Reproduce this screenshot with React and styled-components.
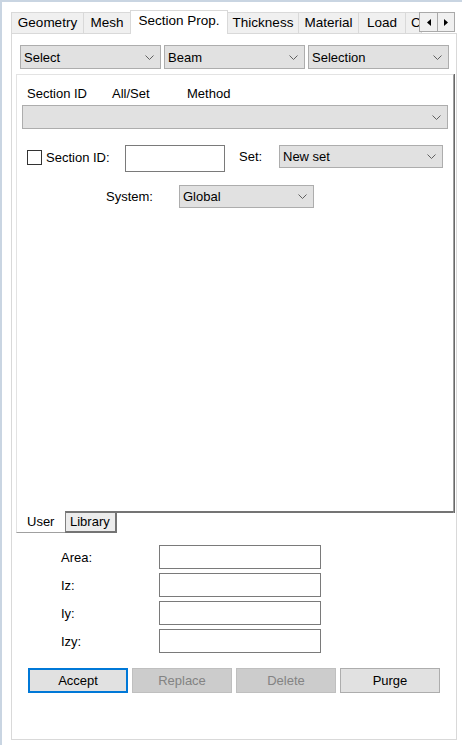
import React from 'react';
import styled, { createGlobalStyle } from 'styled-components';

const GlobalStyle = createGlobalStyle`
  * { box-sizing: border-box; }
  body {
    margin: 0;
    background: #fff;
    font-family: "Liberation Sans", Arial, sans-serif;
    font-size: 13px;
    color: #000;
  }
`;

const Window = styled.div`
  width: 462px;
  height: 745px;
  border-top: 2px solid #c9d5e2;
  border-left: 2px solid #c9d5e2;
  padding: 8px 0 5px 9px;
  display: flex;
  flex-direction: column;
  overflow: hidden;
`;

const TabStrip = styled.div`
  display: flex;
  align-items: flex-end;
  height: 23px;
  width: 446px;
`;

const Tab = styled.div`
  position: relative;
  flex: none;
  width: ${p => p.$width};
  height: ${p => (p.$active ? '24px' : '21px')};
  margin-bottom: ${p => (p.$active ? '-1px' : '0')};
  margin-right: -1px;
  z-index: ${p => (p.$active ? 2 : 1)};
  padding-left: ${p => (p.$clip ? '5px' : '0')};
  text-align: ${p => (p.$clip ? 'left' : 'center')};
  white-space: nowrap;
  line-height: 20px;
  font-size: 13.5px;
  background: ${p => (p.$active ? '#fff' : '#f0f0f0')};
  border: 1px solid #d9d9d9;
  border-bottom: none;
`;

const ScrollArrows = styled.div`
  align-self: flex-start;
  margin-top: 2px;
  margin-left: -2px;
  z-index: 3;
  display: flex;
  height: 20px;
  border: 1px solid #a9a9a9;
  background: #f0f0f0;
`;

const ArrowButton = styled.div`
  width: 17px;
  display: flex;
  align-items: center;
  justify-content: center;
  & + & { border-left: 1px solid #a9a9a9; }
`;

const Panel = styled.div`
  flex: 1;
  width: 446px;
  border: 1px solid #d9d9d9;
  padding: 11px 1px 0 4px;
  display: flex;
  flex-direction: column;
`;

const DropRow = styled.div`
  display: flex;
  gap: 3px;
  margin: 0 6px 0 4px;
`;

const SelectBox = styled.div`
  flex: ${p => (p.$width ? 'none' : '1')};
  width: ${p => p.$width || 'auto'};
  height: ${p => p.$height || '24px'};
  background: #e1e1e1;
  border: 1px solid #adadad;
  display: flex;
  align-items: center;
  justify-content: space-between;
  padding-left: 3px;
  white-space: nowrap;
`;

const Chevron = styled.svg`
  margin-right: 6px;
  flex: none;
`;

const Inner = styled.div`
  margin: 5px 1px 0 0;
  display: flex;
  flex-direction: column;
`;

const InnerBody = styled.div`
  height: 437px;
  border-top: 1px solid #e3e3e3;
  border-left: 1px solid #e3e3e3;
  border-right: 1px solid #a0a0a0;
  box-shadow: 1px 0 0 #696969;
  display: flex;
  flex-direction: column;
`;

const HeaderRow = styled.div`
  display: flex;
  margin-top: 11px;
  padding-left: 10px;
  line-height: 16px;
`;

const HeadCell = styled.span`
  width: ${p => p.$width || 'auto'};
`;

const ComboWrap = styled.div`
  margin: 3px 5px 0 5px;
`;

const CheckRow = styled.div`
  display: flex;
  align-items: flex-start;
  margin-top: 16px;
  padding-left: 10px;
`;

const CheckArea = styled.label`
  width: 98px;
  display: flex;
  align-items: center;
  height: 24px;
`;

const CheckBox = styled.span`
  width: 15px;
  height: 15px;
  border: 1px solid #333;
  background: #fff;
  margin-right: 4px;
`;

const TextField = styled.div`
  width: ${p => p.$width};
  height: ${p => p.$height || '24px'};
  border: 1px solid #7a7a7a;
  background: #fff;
`;

const FieldLabel = styled.span`
  width: ${p => p.$width};
  margin-left: ${p => p.$offset || '0'};
  line-height: 23px;
`;

const SystemRow = styled.div`
  display: flex;
  margin-top: 13px;
  padding-left: 89px;
`;

const BottomTabs = styled.div`
  display: flex;
  height: 22px;
`;

const UserTab = styled.div`
  width: 49px;
  height: 22px;
  background: #fff;
  border-left: 1px solid #e3e3e3;
  border-bottom: 1px solid #a0a0a0;
  padding-left: 10px;
  line-height: 21px;
`;

const LibraryTab = styled.div`
  width: 52px;
  height: 22px;
  background: #ececec;
  border: 1px solid #808080;
  border-top: 2px solid #747474;
  border-right: 2px solid #747474;
  border-bottom: 2px solid #747474;
  padding-left: 4px;
  line-height: 17px;
`;

const TabFiller = styled.div`
  flex: 1;
  border-top: 2px solid #747474;
  border-right: 1px solid #a0a0a0;
  box-shadow: 1px 0 0 #696969;
  height: 2px;
`;

const Fields = styled.div`
  display: grid;
  grid-template-columns: 98px 162px;
  row-gap: 4px;
  margin: 12px 0 0 45px;
  align-items: center;
`;

const ButtonRow = styled.div`
  display: flex;
  gap: 4px;
  margin: 15px 0 0 12px;
`;

const Button = styled.div`
  width: 100px;
  height: 25px;
  display: flex;
  align-items: center;
  justify-content: center;
  background: ${p => (p.$disabled ? '#cccccc' : '#e1e1e1')};
  color: ${p => (p.$disabled ? '#838383' : '#000')};
  border: ${p =>
    p.$default ? '2px solid #0078d7' : p.$disabled ? '1px solid #bfbfbf' : '1px solid #adadad'};
`;

const Down = () => (
  <Chevron width="9" height="5" viewBox="0 0 9 5">
    <polyline points="0.5,0.5 4.5,4.5 8.5,0.5" fill="none" stroke="#606060" strokeWidth="1" />
  </Chevron>
);

function Select({ children, width, height }) {
  return (
    <SelectBox $width={width} $height={height}>
      <span>{children}</span>
      <Down />
    </SelectBox>
  );
}

const tabs = [
  { label: 'Geometry', width: '73px' },
  { label: 'Mesh', width: '48px' },
  { label: 'Section Prop.', width: '98px', active: true },
  { label: 'Thickness', width: '72px' },
  { label: 'Material', width: '61px' },
  { label: 'Load', width: '48px' },
];

export default function App() {
  return (
    <>
      <GlobalStyle />
      <Window>
        <TabStrip>
          {tabs.map(t => (
            <Tab key={t.label} $width={t.width} $active={t.active}>{t.label}</Tab>
          ))}
          <Tab $width="17px" $clip>C</Tab>
          <ScrollArrows>
            <ArrowButton>
              <svg width="4" height="7" viewBox="0 0 4 7"><polygon points="4,0 4,7 0,3.5" fill="#000" /></svg>
            </ArrowButton>
            <ArrowButton>
              <svg width="4" height="7" viewBox="0 0 4 7"><polygon points="0,0 0,7 4,3.5" fill="#000" /></svg>
            </ArrowButton>
          </ScrollArrows>
        </TabStrip>

        <Panel>
          <DropRow>
            <Select>Select</Select>
            <Select>Beam</Select>
            <Select>Selection</Select>
          </DropRow>

          <Inner>
            <InnerBody>
              <HeaderRow>
                <HeadCell $width="85px">Section ID</HeadCell>
                <HeadCell $width="75px">All/Set</HeadCell>
                <HeadCell>Method</HeadCell>
              </HeaderRow>
              <ComboWrap>
                <Select />
              </ComboWrap>

              <CheckRow>
                <CheckArea>
                  <CheckBox />
                  Section ID:
                </CheckArea>
                <TextField $width="100px" $height="27px" />
                <FieldLabel $width="40px" $offset="14px">Set:</FieldLabel>
                <Select width="164px" height="23px">New set</Select>
              </CheckRow>

              <SystemRow>
                <FieldLabel $width="73px">System:</FieldLabel>
                <Select width="135px" height="23px">Global</Select>
              </SystemRow>
            </InnerBody>

            <BottomTabs>
              <UserTab>User</UserTab>
              <LibraryTab>Library</LibraryTab>
              <TabFiller />
            </BottomTabs>
          </Inner>

          <Fields>
            <span>Area:</span>
            <TextField $width="162px" />
            <span>Iz:</span>
            <TextField $width="162px" />
            <span>Iy:</span>
            <TextField $width="162px" />
            <span>Izy:</span>
            <TextField $width="162px" />
          </Fields>

          <ButtonRow>
            <Button $default>Accept</Button>
            <Button $disabled>Replace</Button>
            <Button $disabled>Delete</Button>
            <Button>Purge</Button>
          </ButtonRow>
        </Panel>
      </Window>
    </>
  );
}
